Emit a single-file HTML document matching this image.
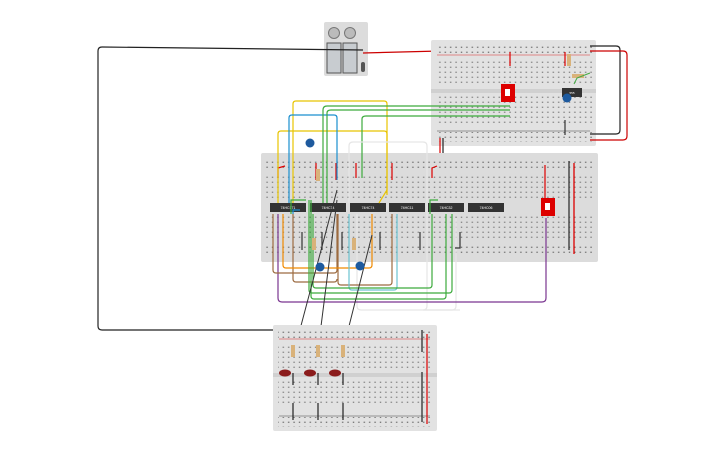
<!DOCTYPE html>
<html><head><meta charset="utf-8"><style>
html,body{margin:0;padding:0;background:#fff;width:725px;height:453px;overflow:hidden}
svg{display:block}
text{font-family:"Liberation Sans",sans-serif}
</style></head><body>
<svg width="725" height="453" viewBox="0 0 725 453" xmlns="http://www.w3.org/2000/svg">
<defs>
<pattern id="d" x="0" y="0" width="5.4" height="5" patternUnits="userSpaceOnUse"><rect x="1.8" y="1.6" width="1.4" height="1.4" fill="#7a7a7a"/></pattern>
<pattern id="d2" x="0" y="0" width="5.4" height="5" patternUnits="userSpaceOnUse"><rect x="1.8" y="1.6" width="1.4" height="1.4" fill="#8a8a8a"/></pattern>
</defs>

<!-- power supply -->
<rect x="324" y="22" width="44" height="54" rx="2" fill="#dcdcdc"/>
<circle cx="334" cy="33" r="5.5" fill="#bbb" stroke="#777"/>
<circle cx="350" cy="33" r="5.5" fill="#bbb" stroke="#777"/>
<rect x="327" y="43" width="14" height="30" fill="#c8ccd0" stroke="#555"/>
<rect x="343" y="43" width="14" height="30" fill="#c8ccd0" stroke="#555"/>
<rect x="361" y="62" width="4" height="10" rx="2" fill="#555"/>

<!-- big black loop -->
<path d="M363 50 L102 47 Q98 47 98 51 L98 326 Q98 330 102 330 L283 330" fill="none" stroke="#222" stroke-width="1.2"/>
<path d="M363 53 L440 51" stroke="#c00" stroke-width="1.2" fill="none"/>

<!-- top right breadboard -->
<rect x="431" y="40" width="165" height="106" rx="2" fill="#e2e2e2"/>
<rect x="436" y="44" width="156" height="10" fill="url(#d)"/>
<line x1="437" y1="55" x2="590" y2="55" stroke="#d66" stroke-width="0.7"/>
<rect x="436" y="60" width="156" height="26" fill="url(#d2)"/>
<rect x="431" y="89" width="165" height="4" fill="#d0d0d0"/>
<rect x="436" y="96" width="156" height="28" fill="url(#d2)"/>
<line x1="437" y1="131" x2="590" y2="131" stroke="#777" stroke-width="0.7"/>
<rect x="436" y="132" width="156" height="10" fill="url(#d)"/>
<path d="M590 46 L616 46 Q620 46 620 50 L620 130 Q620 134 616 134 L590 134" fill="none" stroke="#222" stroke-width="1.2"/>
<path d="M590 51 L623 51 Q627 51 627 55 L627 136 Q627 140 623 140 L590 140" fill="none" stroke="#c00" stroke-width="1.2"/>
<line x1="510" y1="52" x2="510" y2="66" stroke="#d00" stroke-width="1.2"/>
<line x1="565" y1="52" x2="565" y2="66" stroke="#d00" stroke-width="1.2"/>
<rect x="567" y="54" width="4" height="12" fill="#d9b27a"/>
<rect x="572" y="74" width="12" height="4" fill="#d9b27a"/>
<path d="M574 84 L577 78 L590 73" stroke="#4a4" fill="none"/>
<rect x="501" y="84" width="14" height="18" fill="#d00"/>
<rect x="505" y="89" width="5" height="7" fill="#fff"/>
<rect x="562" y="88" width="20" height="9" fill="#333"/>
<text x="572" y="94" font-size="3" fill="#fff" text-anchor="middle">555</text>
<circle cx="567" cy="98" r="4.5" fill="#1e5a9e"/>
<line x1="565" y1="120" x2="565" y2="135" stroke="#333" stroke-width="1.2"/>
<line x1="440" y1="138" x2="440" y2="160" stroke="#d00" stroke-width="1.2"/>
<line x1="443" y1="138" x2="443" y2="162" stroke="#222" stroke-width="1.2"/>

<!-- main breadboard -->
<rect x="261" y="153" width="337" height="109" rx="2" fill="#dcdcdc"/>
<rect x="266" y="158" width="326" height="12" fill="url(#d)"/>
<rect x="266" y="175" width="326" height="26" fill="url(#d2)"/>
<rect x="266" y="214" width="326" height="26" fill="url(#d2)"/>
<rect x="266" y="244" width="326" height="12" fill="url(#d)"/>
<g fill="#333">
<rect x="270" y="203" width="36" height="9"/><rect x="310" y="203" width="36" height="9"/><rect x="350" y="203" width="36" height="9"/>
<rect x="389" y="203" width="36" height="9"/><rect x="428" y="203" width="36" height="9"/><rect x="468" y="203" width="36" height="9"/>
</g>
<g font-size="3.5" fill="#fff" text-anchor="middle">
<text x="288" y="209">74HC171</text><text x="328" y="209">74HC74</text><text x="368" y="209">74HC74</text>
<text x="407" y="209">74HC11</text><text x="446" y="209">74HC32</text><text x="486" y="209">74HC06</text>
</g>
<rect x="541" y="198" width="14" height="18" fill="#d00"/>
<rect x="545" y="203" width="5" height="7" fill="#fff"/>
<line x1="569" y1="161" x2="569" y2="250" stroke="#333" stroke-width="1.3"/>
<line x1="574" y1="163" x2="574" y2="254" stroke="#d00" stroke-width="1.3"/>
<line x1="545" y1="165" x2="545" y2="198" stroke="#d00" stroke-width="1.2"/>

<!-- wires -->
<g fill="none" stroke-width="1.2">
<path d="M278 178 L278 168 L285 166" stroke="#d00"/>
<path d="M432 178 L432 168 L437 166" stroke="#d00"/>
<path d="M316 163 L316 180" stroke="#d00"/>
<path d="M336 163 L336 180" stroke="#d00"/>
<path d="M356 163 L356 178" stroke="#d00"/>
<path d="M392 163 L392 180" stroke="#d00"/>
<path d="M293 203 L293 104 Q293 101 296 101 L384 101 Q387 101 387 104 L387 190 L379 203" stroke="#e8c400"/>
<path d="M278 203 L278 134 Q278 131 281 131 L384 131 Q387 131 387 134 L387 195" stroke="#e8c400"/>
<path d="M289 203 L289 118 Q289 115 292 115 L334 115 Q337 115 337 118 L337 180" stroke="#1a8fcf"/>
<path d="M323 203 L323 110 Q323 106 327 106 L510 106" stroke="#3cab3c"/>
<path d="M327 203 L327 113 Q327 110 331 110 L510 110" stroke="#3cab3c"/>
<path d="M362 178 L362 119 Q362 116 366 116 L510 116" stroke="#3cab3c"/>
<path d="M349 203 L349 146 Q349 142 353 142 L423 142 Q427 142 427 146 L427 306 Q427 310 423 310 L460 310" stroke="#e6e6e6"/>
<path d="M357 214 L357 306 Q357 310 361 310 L452 310 Q456 310 456 306 L456 218" stroke="#e6e6e6"/>
<path d="M278 214 L278 298 Q278 302 282 302 L542 302 Q546 302 546 298 L546 218" stroke="#7a3590"/>
<path d="M273 214 L273 270 Q273 273 276 273 L334 273 Q337 273 337 270 L337 214" stroke="#9c6b40"/>
<path d="M293 214 L293 279 Q293 282 296 282 L334 282 Q337 282 337 279" stroke="#9c6b40"/>
<path d="M338 214 L338 282 Q338 285 341 285 L389 285 Q392 285 392 282 L392 214" stroke="#9c6b40"/>
<path d="M283 214 L283 265 Q283 268 286 268 L369 268 Q372 268 372 265 L372 214" stroke="#f08a00"/>
<path d="M349 214 L349 287 Q349 290 352 290 L394 290 Q397 290 397 287 L397 214" stroke="#6cc3d0"/>
<path d="M309 200 L309 290 Q309 293 312 293 L449 293 Q452 293 452 290 L452 214" stroke="#3cab3c"/>
<path d="M311 200 L311 296 Q311 299 314 299 L443 299 Q446 299 446 296 L446 214" stroke="#3cab3c"/>
<path d="M313 214 L313 285 Q313 288 316 288 L429 288 Q432 288 432 285 L432 214" stroke="#3cab3c"/>
<path d="M291 214 L291 200 L306 200" stroke="#3cab3c"/>
<path d="M430 214 L430 200 L438 200" stroke="#3cab3c"/>
<path d="M293 214 L293 210 L300 210" stroke="#1a8fcf"/>
<path d="M460 232 L460 248 L455 248" stroke="#333"/>
<path d="M302 232 L302 250 M322 232 L322 250 M342 232 L342 250 M380 232 L380 250 M420 232 L420 250" stroke="#333"/>
<path d="M294 352 L337 190 M318 350 L337 200 M343 350 L372 235" stroke="#333" stroke-width="1"/>
</g>
<g fill="#d9b27a">
<rect x="316" y="169" width="4" height="12"/><rect x="312" y="238" width="4" height="12"/><rect x="352" y="238" width="4" height="12"/>
</g>
<circle cx="310" cy="143" r="4.5" fill="#1e5a9e"/>
<circle cx="320" cy="267" r="4.5" fill="#1e5a9e"/>
<circle cx="360" cy="266" r="4.5" fill="#1e5a9e"/>

<!-- bottom breadboard -->
<rect x="273" y="325" width="164" height="106" rx="2" fill="#e2e2e2"/>
<rect x="278" y="328" width="154" height="10" fill="url(#d)"/>
<line x1="279" y1="339" x2="430" y2="339" stroke="#d66" stroke-width="0.7"/>
<rect x="278" y="344" width="154" height="26" fill="url(#d2)"/>
<rect x="273" y="373" width="164" height="4" fill="#d0d0d0"/>
<rect x="278" y="380" width="154" height="26" fill="url(#d2)"/>
<line x1="279" y1="416" x2="430" y2="416" stroke="#777" stroke-width="0.7"/>
<rect x="278" y="417" width="154" height="10" fill="url(#d)"/>
<g fill="#d9b27a"><rect x="291" y="345" width="4" height="12"/><rect x="316" y="345" width="4" height="12"/><rect x="341" y="345" width="4" height="12"/></g>
<g fill="#8b1c1c"><ellipse cx="285" cy="373" rx="6" ry="3.5"/><ellipse cx="310" cy="373" rx="6" ry="3.5"/><ellipse cx="335" cy="373" rx="6" ry="3.5"/></g>
<g stroke="#222" stroke-width="1.2" fill="none">
<path d="M293 373 L293 385 M318 373 L318 385 M343 373 L343 385"/>
<path d="M293 403 L293 420 M318 403 L318 420 M343 403 L343 420"/>
<path d="M422 330 L422 352 M422 372 L422 422"/>
</g>
<path d="M427 334 L427 424" stroke="#d00" stroke-width="1.2"/>
</svg>
</body></html>
